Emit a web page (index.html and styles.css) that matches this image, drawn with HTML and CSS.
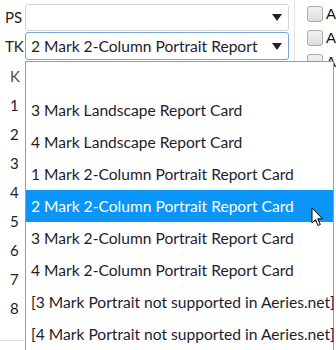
FILE: index.html
```html
<!DOCTYPE html>
<html>
<head>
<meta charset="utf-8">
<link rel="stylesheet" href="styles.css">
</head>
<body>
<div class="page">
  <div class="form">
    <div class="field ps">
      <span class="lbl">PS</span>
      <div class="select"><span class="val"></span><span class="arrow"></span></div>
    </div>
    <div class="field tk">
      <span class="lbl">TK</span>
      <div class="select focus"><span class="val">2 Mark 2-Column Portrait Report</span><span class="arrow"></span></div>
    </div>
    <div class="grades">
      <div class="grade k">K</div>
      <div class="grade">1</div>
      <div class="grade">2</div>
      <div class="grade">3</div>
      <div class="grade">4</div>
      <div class="grade">5</div>
      <div class="grade">6</div>
      <div class="grade">7</div>
      <div class="grade">8</div>
    </div>
    <div class="rule"></div>
  </div>
  <div class="side">
    <div class="chk"><span class="box"></span><span class="t">A</span></div>
    <div class="chk"><span class="box"></span><span class="t">A</span></div>
    <div class="chk"><span class="box checked"></span><span class="t">A</span></div>
  </div>
</div>
<ul class="dropdown">
  <li class="opt">&nbsp;</li>
  <li class="opt">3 Mark Landscape Report Card</li>
  <li class="opt">4 Mark Landscape Report Card</li>
  <li class="opt">1 Mark 2-Column Portrait Report Card</li>
  <li class="opt sel">2 Mark 2-Column Portrait Report Card</li>
  <li class="opt">3 Mark 2-Column Portrait Report Card</li>
  <li class="opt">4 Mark 2-Column Portrait Report Card</li>
  <li class="opt">[3 Mark Portrait not supported in Aeries.net]</li>
  <li class="opt">[4 Mark Portrait not supported in Aeries.net]</li>
</ul>
<svg class="cursor" width="14" height="21" viewBox="0 0 14 21">
  <path d="M1 1 L1 16 L4.5 12.5 L7 18.5 L9.3 17.5 L6.8 11.8 L11.5 11.8 Z" fill="#fff" stroke="#000" stroke-width="1" stroke-linejoin="round"/>
</svg>
</body>
</html>
```
FILE: styles.css
```css
html, body {
  margin: 0;
  padding: 0;
  background: #fff;
  overflow: hidden;
}
body {
  width: 336px;
  height: 350px;
  position: relative;
  font-family: "Lato", "Liberation Sans", sans-serif;
  color: #1d1d2b;
}
.page {
  display: flex;
  height: 350px;
}
.form {
  width: 297px;
  border-right: 1px solid #e4e4e4;
  padding-top: 3px;
  box-sizing: border-box;
  position: relative;
}
.field {
  display: flex;
  align-items: center;
  height: 28px;
  margin-bottom: 1px;
}
.lbl {
  width: 25px;
  padding-left: 5px;
  box-sizing: border-box;
  font-size: 15px;
  color: #222;
}
.select {
  width: 264px;
  height: 27px;
  box-sizing: border-box;
  border: 1px solid #d4d4d4;
  border-radius: 3px;
  display: flex;
  align-items: center;
  justify-content: space-between;
  padding: 0 6px 0 5px;
}
.select.focus {
  border-color: #7ba6dd;
  height: 28px;
}
.val {
  font-size: 15.6px;
  color: #1d1d2b;
  white-space: nowrap;
}
.arrow {
  width: 0;
  height: 0;
  border-left: 5px solid transparent;
  border-right: 5px solid transparent;
  border-top: 7px solid #222;
  margin-top: 1px;
}
.grades {
  display: flex;
  flex-direction: column;
  padding-top: 1px;
}
.grade {
  height: 29px;
  line-height: 29px;
  font-size: 15px;
  padding-left: 10px;
  color: #1d1d2b;
}
.grade.k {
  color: #5a4b1c;
}
.rule {
  position: absolute;
  left: 0;
  top: 340px;
  width: 25px;
  border-top: 1px solid #ddd;
}
.side {
  display: flex;
  flex-direction: column;
  padding: 5px 0 0 12px;
  gap: 7px;
}
.chk {
  display: flex;
  align-items: center;
  gap: 3px;
  height: 17px;
}
.box {
  width: 16px;
  height: 16px;
  border: 1px solid #adadad;
  border-radius: 3px;
  background: linear-gradient(#f2f2f2, #dcdcdc);
  box-sizing: border-box;
  flex: none;
}
.t {
  font-size: 15px;
  font-family: "Liberation Sans", sans-serif;
  color: #111;
}
.dropdown {
  position: absolute;
  left: 25px;
  top: 61px;
  width: 309px;
  height: 300px;
  margin: 0;
  padding: 0;
  list-style: none;
  background: #fff;
  border: 1px solid #7d9fd3;
  box-sizing: border-box;
}
.opt {
  height: 32px;
  line-height: 32px;
  padding-left: 5px;
  font-size: 15.6px;
  white-space: nowrap;
  color: #1d1d2b;
}
.opt.sel {
  background: #0b96f7;
  color: #fff;
}
.cursor {
  position: absolute;
  left: 311px;
  top: 207px;
}
```
